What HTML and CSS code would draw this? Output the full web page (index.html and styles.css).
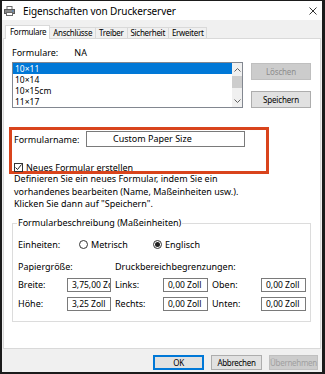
FILE: index.html
```html
<!DOCTYPE html>
<html>
<head>
    <meta charset="UTF-8">
    <title>Eigenschaften von Druckerserver</title>
    <link rel="stylesheet" href="styles.css">
</head>
<body>
    <div class="window">
        <div class="titlebar">
            <svg class="app-icon" width="11" height="10" viewBox="0 0 11 10">
                <rect x="3" y="0.5" width="5" height="3" fill="#fff" stroke="#6b6b6b"/>
                <rect x="0.5" y="3.5" width="10" height="4" fill="#8a8a8a" stroke="#5a5a5a"/>
                <rect x="2.5" y="6.5" width="6" height="3" fill="#fff" stroke="#6b6b6b"/>
                <rect x="8" y="4.5" width="1.5" height="1" fill="#3c8ad8"/>
            </svg>
            <span class="title">Eigenschaften von Druckerserver</span>
            <svg class="close" width="8" height="8" viewBox="0 0 8 8">
                <path d="M0.5 0.5 L7.5 7.5 M7.5 0.5 L0.5 7.5" stroke="#333" stroke-width="1"/>
            </svg>
        </div>

        <div class="content">
            <div class="tabs">
                <div class="tab active">Formulare</div>
                <div class="tab">Anschlüsse</div>
                <div class="tab">Treiber</div>
                <div class="tab">Sicherheit</div>
                <div class="tab">Erweitert</div>
            </div>

            <div class="panel">
                <div class="forms-head">
                    <span class="forms-label">Formulare:</span>
                    <span>NA</span>
                </div>

                <div class="list-row">
                    <div class="listbox">
                        <div class="items">
                            <div class="item selected">10×11</div>
                            <div class="item">10×14</div>
                            <div class="item">10×15cm</div>
                            <div class="item">11×17</div>
                        </div>
                        <div class="scrollbar">
                            <div class="arrow">
                                <svg width="7" height="4" viewBox="0 0 7 4"><path d="M0.5 3.5 L3.5 0.5 L6.5 3.5" fill="none" stroke="#606060"/></svg>
                            </div>
                            <div class="thumb"></div>
                            <div class="arrow down">
                                <svg width="7" height="4" viewBox="0 0 7 4"><path d="M0.5 0.5 L3.5 3.5 L6.5 0.5" fill="none" stroke="#606060"/></svg>
                            </div>
                        </div>
                    </div>
                    <div class="side-buttons">
                        <div class="btn disabled">Löschen</div>
                        <div class="btn">Speichern</div>
                    </div>
                </div>

                <div class="name-box">
                    <div class="name-row">
                        <span class="name-label">Formularname:</span>
                        <div class="name-field">Custom Paper Size</div>
                    </div>
                    <div class="check-row">
                        <span class="checkbox">
                            <svg width="9" height="9" viewBox="0 0 9 9"><path d="M1.5 4.5 L3.5 6.5 L7.5 1.5" fill="none" stroke="#222" stroke-width="1"/></svg>
                        </span>
                        <span>Neues Formular erstellen</span>
                    </div>
                </div>

                <p class="desc">Definieren Sie ein neues Formular, indem Sie ein<br>vorhandenes bearbeiten (Name, Maßeinheiten usw.).<br>Klicken Sie dann auf "Speichern".</p>

                <div class="group">
                    <div class="group-title">Formularbeschreibung (Maßeinheiten)</div>
                    <div class="units-row">
                        <span class="units-label">Einheiten:</span>
                        <span class="option"><span class="radio"></span>Metrisch</span>
                        <span class="option"><span class="radio checked"></span>Englisch</span>
                    </div>
                    <div class="sizes">
                        <span class="span-2">Papiergröße:</span>
                        <span class="span-4 pad">Druckbereichbegrenzungen:</span>

                        <span>Breite:</span>
                        <span class="field">3,75,00 Zoll</span>
                        <span class="pad">Links:</span>
                        <span class="field">0,00 Zoll</span>
                        <span class="pad">Oben:</span>
                        <span class="field">0,00 Zoll</span>

                        <span>Höhe:</span>
                        <span class="field">3,25 Zoll</span>
                        <span class="pad">Rechts:</span>
                        <span class="field">0,00 Zoll</span>
                        <span class="pad">Unten:</span>
                        <span class="field">0,00 Zoll</span>
                    </div>
                </div>
            </div>

            <div class="footer">
                <div class="btn footer-btn default">OK</div>
                <div class="btn footer-btn">Abbrechen</div>
                <div class="btn footer-btn disabled">Übernehmen</div>
            </div>
        </div>
    </div>
</body>
</html>
```

FILE: styles.css
```css
* {
    box-sizing: border-box;
}

body {
    margin: 0;
    font-family: "Noto Sans", sans-serif;
    font-size: 9px;
    color: #000;
    background-color: #000;
}

.window {
    width: 325px;
    height: 374px;
    border-style: solid;
    border-color: #1b1b1b;
    border-width: 1px 3px 2px 2px;
    background-color: #f0f0f0;
    display: flex;
    flex-direction: column;
}

.titlebar {
    height: 19px;
    background-color: #ffffff;
    display: flex;
    align-items: center;
    padding: 0 4px 0 2px;
}

.app-icon {
    margin-right: 8px;
}

.title {
    flex-grow: 1;
    font-size: 10px;
    letter-spacing: -0.1px;
}

.close {
    margin-right: 1px;
}

.content {
    flex-grow: 1;
    display: flex;
    flex-direction: column;
    padding: 0 1px;
}

/* pestañas */
.tabs {
    height: 18px;
    display: flex;
    align-items: flex-end;
    padding-left: 3px;
    font-size: 8px;
    letter-spacing: -0.3px;
}

.tab {
    height: 11px;
    line-height: 10px;
    padding: 0 3px;
    border: 1px solid #d9d9d9;
    border-bottom: none;
    margin-left: -1px;
    background-color: #f0f0f0;
}

.tab.active {
    height: 14px;
    line-height: 12px;
    padding: 0 3px 0 4px;
    margin-bottom: -1px;
    background-color: #ffffff;
    position: relative;
    z-index: 1;
}

.panel {
    height: 311px;
    background-color: #ffffff;
    border: 1px solid #d9d9d9;
    padding: 8px 0 0 8px;
}

.forms-head {
    height: 12px;
    line-height: 12px;
}

.forms-label {
    display: inline-block;
    width: 60px;
}

.list-row {
    display: flex;
    margin-top: 3px;
}

.listbox {
    width: 231px;
    height: 46px;
    border: 1px solid #828790;
    display: flex;
    overflow: hidden;
}

.items {
    flex-grow: 1;
    overflow: hidden;
    font-size: 8.5px;
}

.item {
    height: 11px;
    line-height: 11px;
    padding-left: 2px;
}

.item.selected {
    background-color: #0078d7;
    color: #ffffff;
}

.scrollbar {
    width: 10px;
    background-color: #f0f0f0;
    display: flex;
    flex-direction: column;
    align-items: center;
}

.arrow {
    height: 13px;
    display: flex;
    align-items: center;
    justify-content: center;
}

.arrow.down {
    margin-top: auto;
}

.thumb {
    width: 10px;
    height: 12px;
    background-color: #cdcdcd;
}

.side-buttons {
    margin-left: 8px;
    display: flex;
    flex-direction: column;
    gap: 11px;
    padding-top: 1px;
}

.btn {
    width: 60px;
    height: 17px;
    line-height: 15px;
    text-align: center;
    font-size: 8px;
    letter-spacing: -0.15px;
    background-color: #e1e1e1;
    border: 1px solid #adadad;
}

.btn.disabled {
    background-color: #cccccc;
    border-color: #bfbfbf;
    color: #8d8d8d;
}

/* recuadro rojo */
.name-box {
    width: 260px;
    height: 47px;
    margin: 19px 0 0 -3px;
    border: 3px solid #d9441c;
    padding: 1px 0 0 2px;
}

.name-row {
    display: flex;
    align-items: center;
}

.name-label {
    width: 72px;
}

.name-field {
    width: 159px;
    height: 16px;
    line-height: 14px;
    border: 1px solid #7a7a7a;
    padding-left: 26px;
}

.check-row {
    display: flex;
    align-items: center;
    height: 9px;
    margin-top: 16px;
}

.checkbox {
    width: 9px;
    height: 9px;
    border: 1px solid #333333;
    margin-right: 3px;
    display: flex;
}

.checkbox svg {
    margin: -1px;
}

.desc {
    margin: -1px 0 0 2px;
    line-height: 12.5px;
}

/* grupo de medidas */
.group {
    width: 299px;
    height: 99px;
    margin-top: 12px;
    border: 1px solid #dcdcdc;
    padding: 0 0 0 5px;
}

.group-title {
    width: fit-content;
    background-color: #ffffff;
    line-height: 12px;
    height: 12px;
    margin: -7px 0 0 -1px;
    padding: 0 1px;
}

.units-row {
    display: flex;
    align-items: center;
    height: 12px;
    margin-top: 10px;
}

.units-label {
    width: 61px;
}

.option {
    width: 74px;
    display: flex;
    align-items: center;
}

.radio {
    width: 9px;
    height: 9px;
    border: 1px solid #333333;
    border-radius: 50%;
    margin-right: 3px;
    display: flex;
    align-items: center;
    justify-content: center;
}

.radio.checked::after {
    content: "";
    width: 5px;
    height: 5px;
    border-radius: 50%;
    background-color: #222222;
}

.sizes {
    display: grid;
    grid-template-columns: 49px 44px 52px 45px 53px 45px;
    grid-template-rows: 12px 14px 14px;
    row-gap: 5px;
    margin-top: 10px;
    align-items: center;
}

.sizes .span-2 {
    grid-column: span 2;
}

.sizes .span-4 {
    grid-column: span 4;
}

.pad {
    padding-left: 4px;
}

.field {
    height: 14px;
    line-height: 12px;
    font-size: 8.5px;
    border: 1px solid #7a7a7a;
    padding-left: 4px;
    white-space: nowrap;
    overflow: hidden;
    text-overflow: clip;
}

.footer {
    flex-grow: 1;
    display: flex;
    justify-content: flex-end;
    gap: 7px;
    padding: 6px 3px 0 0;
}

.footer-btn {
    width: 51px;
    height: 15px;
    line-height: 13px;
    letter-spacing: -0.3px;
}

.footer-btn.disabled {
    width: 49px;
    color: #a0a0a0;
}

.footer-btn.default {
    border: 1px solid #0078d7;
    box-shadow: inset 0 0 0 1px #0078d7;
}
```
